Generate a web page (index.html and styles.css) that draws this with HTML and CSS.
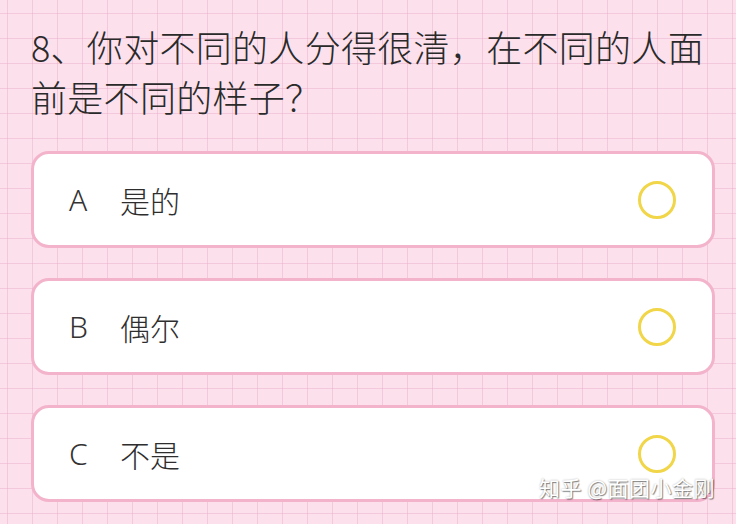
FILE: index.html
```html
<!DOCTYPE html>
<html lang="zh">
<head>
<meta charset="utf-8">
<link rel="stylesheet" href="styles.css">
</head>
<body>
<div class="page">
  <h1 class="question">8、你对不同的人分得很清，在不同的人面<br>前是不同的样子？</h1>
  <div class="options">
    <div class="option"><span class="letter">A</span><span class="label">是的</span><span class="radio"></span></div>
    <div class="option"><span class="letter">B</span><span class="label">偶尔</span><span class="radio"></span></div>
    <div class="option"><span class="letter">C</span><span class="label">不是</span><span class="radio"></span></div>
  </div>
  <div class="watermark">知乎 @面团小金刚</div>
</div>
</body>
</html>
```
FILE: styles.css
```css
html, body {
  margin: 0;
  padding: 0;
}
body {
  width: 736px;
  height: 524px;
  overflow: hidden;
  background-color: #fce1ed;
  background-image:
    linear-gradient(to right, rgba(236, 170, 200, 0.45) 1px, transparent 1px),
    linear-gradient(to bottom, rgba(236, 170, 200, 0.45) 1px, transparent 1px);
  background-size: 25px 25px;
  background-position: 7px 13px;
  font-family: "Noto Sans CJK SC", "Noto Sans", sans-serif;
  color: #383838;
}
.page {
  position: relative;
  width: 736px;
  height: 524px;
  padding: 21px 10px 0 31px;
  box-sizing: border-box;
}
.question {
  margin: 0;
  font-size: 36px;
  font-weight: 300;
  line-height: 50px;
  letter-spacing: 0.3px;
  color: #2a2a2a;
  white-space: nowrap;
}
.options {
  margin-top: 30px;
  margin-right: 11px;
  display: flex;
  flex-direction: column;
  gap: 30px;
}
.option {
  height: 97px;
  box-sizing: border-box;
  border: 3px solid #f2b3cb;
  border-radius: 18px;
  background: #fff;
  display: flex;
  align-items: center;
  padding: 0 36px 0 35px;
}
.letter {
  width: 51px;
  font-family: "Noto Sans", "Liberation Sans", sans-serif;
  font-size: 30px;
  font-weight: 300;
  color: #333;
}
.label {
  flex: 1;
  font-size: 30px;
  font-weight: 300;
  color: #2e2e2e;
}
.radio {
  width: 32px;
  height: 32px;
  border: 3px solid #f0d648;
  border-radius: 50%;
  box-sizing: content-box;
}
.watermark {
  position: absolute;
  right: 21px;
  bottom: 22px;
  font-size: 21px;
  color: #fff;
  text-shadow: 1px 1px 1px rgba(0,0,0,0.45), 0 0 2px rgba(0,0,0,0.3);
  letter-spacing: 0.5px;
}
```
